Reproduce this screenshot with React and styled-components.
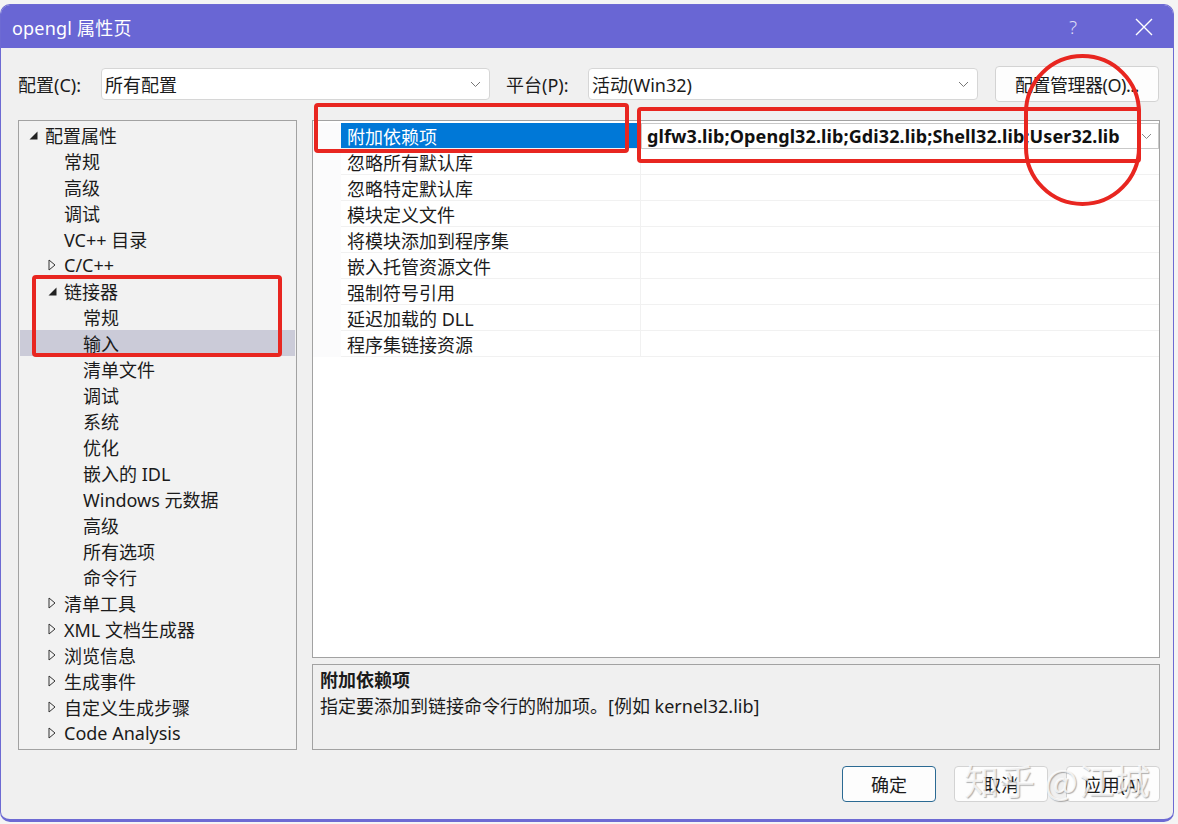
import React from 'react';
import styled, { createGlobalStyle } from 'styled-components';

const GlobalStyle = createGlobalStyle`
	html, body {
		margin: 0;
		background: #f4f4f4;
	}
	body {
		font-family: "Segoe UI", "Noto Sans", "Noto Sans CJK SC", sans-serif;
		color: #1b1b1b;
	}
	* {
		box-sizing: border-box;
	}
`;

const Page = styled.div`
	position: relative;
	width: 1178px;
	height: 824px;
	overflow: hidden;
	padding-top: 4px;
`;

const Window = styled.div`
	width: 1174px;
	height: 818px;
	border: 1px solid #6d6ad3;
	border-bottom-width: 3px;
	border-radius: 10px;
	background: #f0f0f0;
	overflow: hidden;
	display: flex;
	flex-direction: column;
`;

const TitleBar = styled.div`
	height: 43px;
	flex-shrink: 0;
	background: #6966d4;
	display: flex;
	align-items: center;
	padding-left: 11px;
	color: #fff;
	font-size: 18px;
`;

const TitleText = styled.div`
	flex: 1;
	letter-spacing: 0.2px;
`;

const TitleButton = styled.div`
	width: 58px;
	height: 43px;
	display: flex;
	align-items: center;
	justify-content: center;
	margin-left: 13px;
	color: #dcdcf4;
	font-size: 19px;
	font-weight: 300;
`;

const Body = styled.div`
	flex: 1;
	display: flex;
	flex-direction: column;
	padding: 18px 13px 0 17px;
`;

const ConfigRow = styled.div`
	height: 36px;
	display: flex;
	align-items: center;
`;

const Label = styled.div`
	width: ${p => p.w}px;
	font-size: 18px;
	flex-shrink: 0;
`;

const Combo = styled.div`
	width: ${p => p.w}px;
	height: 32px;
	margin-right: ${p => p.mr || 0}px;
	background: #fff;
	border: 1px solid #d6d6d6;
	border-radius: 4px;
	display: flex;
	align-items: center;
	justify-content: space-between;
	padding: 0 8px 0 3px;
	font-size: 18px;
`;

const Button = styled.div`
	width: ${p => p.w || 94}px;
	height: 36px;
	background: #fdfdfd;
	border: 1px solid ${p => (p.primary ? '#2b6a93' : '#d3d3d3')};
	border-radius: 4px;
	display: flex;
	align-items: center;
	justify-content: center;
	font-size: 18px;
	letter-spacing: ${p => p.ls || 0}px;
	flex-shrink: 0;
`;

const Main = styled.div`
	margin-top: 18px;
	height: 630px;
	display: flex;
	gap: 15px;
`;

const Tree = styled.div`
	width: 279px;
	flex-shrink: 0;
	border: 1px solid #a2a2a2;
	background: #f2f2f2;
	padding-top: 1px;
`;

const TreeRow = styled.div`
	height: 26px;
	display: flex;
	align-items: center;
	padding-left: ${p => 6 + p.level * 19}px;
	margin: 0 1px;
	font-size: 18px;
	background: ${p => (p.selected ? '#cbcbd8' : 'transparent')};
`;

const ArrowBox = styled.div`
	width: 19px;
	height: 26px;
	display: flex;
	align-items: center;
	padding-left: 3px;
	flex-shrink: 0;
`;

const Right = styled.div`
	flex: 1;
	display: flex;
	flex-direction: column;
	gap: 6px;
`;

const Grid = styled.div`
	flex: 1;
	background: #fff;
	border: 1px solid #a2a2a2;
	padding-top: 2px;
`;

const GridRow = styled.div`
	height: 26px;
	display: flex;
`;

const Gutter = styled.div`
	width: 28px;
	flex-shrink: 0;
	background: #fbfbfc;
`;

const NameCell = styled.div`
	width: 300px;
	flex-shrink: 0;
	display: flex;
	align-items: center;
	padding-left: 6px;
	font-size: 18px;
	border-bottom: 1px solid #f1f1f1;
	border-right: 1px solid #f1f1f1;
	background: ${p => (p.selected ? '#0078d7' : '#fff')};
	color: ${p => (p.selected ? '#fff' : '#1b1b1b')};
`;

const ValueCell = styled.div`
	flex: 1;
	border-bottom: 1px solid #f1f1f1;
`;

const ValueEdit = styled.div`
	flex: 1;
	display: flex;
	align-items: center;
	justify-content: space-between;
	border: 1px solid #c9c9c9;
	padding: 0 6px 0 5px;
	font-size: 18px;
	font-weight: bold;
	letter-spacing: 0.1px;
	color: #111;
`;

const Desc = styled.div`
	height: 86px;
	flex-shrink: 0;
	border: 1px solid #a2a2a2;
	background: #f0f0f0;
	padding: 2px 7px;
	font-size: 18px;
	line-height: 26px;
`;

const DescTitle = styled.div`
	font-weight: bold;
`;

const Footer = styled.div`
	margin-top: 16px;
	display: flex;
	justify-content: flex-end;
	gap: 18px;
`;

const Watermark = styled.div`
	position: absolute;
	left: 964px;
	top: 754px;
	font-size: 35px;
	letter-spacing: 1px;
	font-family: "Noto Sans CJK SC", sans-serif;
	color: rgba(255, 255, 255, 0.8);
	text-shadow: 1px 1px 1px rgba(60, 60, 60, 0.4);
	pointer-events: none;
`;

const RedBox = styled.div`
	position: absolute;
	border: 4px solid #e82620;
	border-radius: ${p => p.r || 4}px;
	pointer-events: none;
`;

const Chevron = ({ color = '#777' }) => (
	<svg width="11" height="7" viewBox="0 0 11 7">
		<path d="M1 1 L5.5 5.5 L10 1" fill="none" stroke={color} strokeWidth="1" />
	</svg>
);

const Arrow = ({ open }) =>
	open ? (
		<svg width="9" height="9" viewBox="0 0 9 9">
			<path d="M8.5 0.5 L8.5 8.5 L0.5 8.5 Z" fill="#222" />
		</svg>
	) : (
		<svg width="8" height="12" viewBox="0 0 8 12">
			<path d="M1 1 L7 6 L1 11 Z" fill="none" stroke="#333" strokeWidth="1" />
		</svg>
	);

const treeItems = [
	{ label: '配置属性', level: 0, arrow: 'open' },
	{ label: '常规', level: 1 },
	{ label: '高级', level: 1 },
	{ label: '调试', level: 1 },
	{ label: 'VC++ 目录', level: 1 },
	{ label: 'C/C++', level: 1, arrow: 'closed' },
	{ label: '链接器', level: 1, arrow: 'open' },
	{ label: '常规', level: 2 },
	{ label: '输入', level: 2, selected: true },
	{ label: '清单文件', level: 2 },
	{ label: '调试', level: 2 },
	{ label: '系统', level: 2 },
	{ label: '优化', level: 2 },
	{ label: '嵌入的 IDL', level: 2 },
	{ label: 'Windows 元数据', level: 2 },
	{ label: '高级', level: 2 },
	{ label: '所有选项', level: 2 },
	{ label: '命令行', level: 2 },
	{ label: '清单工具', level: 1, arrow: 'closed' },
	{ label: 'XML 文档生成器', level: 1, arrow: 'closed' },
	{ label: '浏览信息', level: 1, arrow: 'closed' },
	{ label: '生成事件', level: 1, arrow: 'closed' },
	{ label: '自定义生成步骤', level: 1, arrow: 'closed' },
	{ label: 'Code Analysis', level: 1, arrow: 'closed' },
];

const props = [
	'附加依赖项',
	'忽略所有默认库',
	'忽略特定默认库',
	'模块定义文件',
	'将模块添加到程序集',
	'嵌入托管资源文件',
	'强制符号引用',
	'延迟加载的 DLL',
	'程序集链接资源',
];

const App = () => (
	<Page>
		<GlobalStyle />
		<Window>
			<TitleBar>
				<TitleText>opengl 属性页</TitleText>
				<TitleButton>?</TitleButton>
				<TitleButton>
					<svg width="18" height="18" viewBox="0 0 18 18">
						<path d="M1 1 L17 17 M17 1 L1 17" stroke="#fff" strokeWidth="1.4" />
					</svg>
				</TitleButton>
			</TitleBar>
			<Body>
				<ConfigRow>
					<Label w={83}>配置(C):</Label>
					<Combo w={389} mr={16}>
						<span>所有配置</span>
						<Chevron />
					</Combo>
					<Label w={82}>平台(P):</Label>
					<Combo w={390} mr={17}>
						<span>活动(Win32)</span>
						<Chevron />
					</Combo>
					<Button w={164} ls={-0.5}>配置管理器(O)...</Button>
				</ConfigRow>
				<Main>
					<Tree>
						{treeItems.map((item, i) => (
							<TreeRow key={i} level={item.level} selected={item.selected}>
								<ArrowBox>{item.arrow && <Arrow open={item.arrow === 'open'} />}</ArrowBox>
								<span>{item.label}</span>
							</TreeRow>
						))}
					</Tree>
					<Right>
						<Grid>
							{props.map((name, i) => (
								<GridRow key={name}>
									<Gutter />
									<NameCell selected={i === 0}>{name}</NameCell>
									{i === 0 ? (
										<ValueEdit>
											<span>glfw3.lib;Opengl32.lib;Gdi32.lib;Shell32.lib;User32.lib</span>
											<Chevron color="#888" />
										</ValueEdit>
									) : (
										<ValueCell />
									)}
								</GridRow>
							))}
						</Grid>
						<Desc>
							<DescTitle>附加依赖项</DescTitle>
							<div>指定要添加到链接命令行的附加项。[例如 kernel32.lib]</div>
						</Desc>
					</Right>
				</Main>
				<Footer>
					<Button primary>确定</Button>
					<Button>取消</Button>
					<Button>应用(A)</Button>
				</Footer>
			</Body>
		</Window>
		<Watermark>知乎 @江城</Watermark>
		<RedBox style={{ left: 314, top: 103, width: 315, height: 50 }} />
		<RedBox style={{ left: 637, top: 107, width: 504, height: 56 }} />
		<RedBox style={{ left: 32, top: 275, width: 250, height: 82 }} />
		<RedBox r={999} style={{ left: 1024, top: 54, width: 117, height: 152 }} />
	</Page>
);

export default App;
